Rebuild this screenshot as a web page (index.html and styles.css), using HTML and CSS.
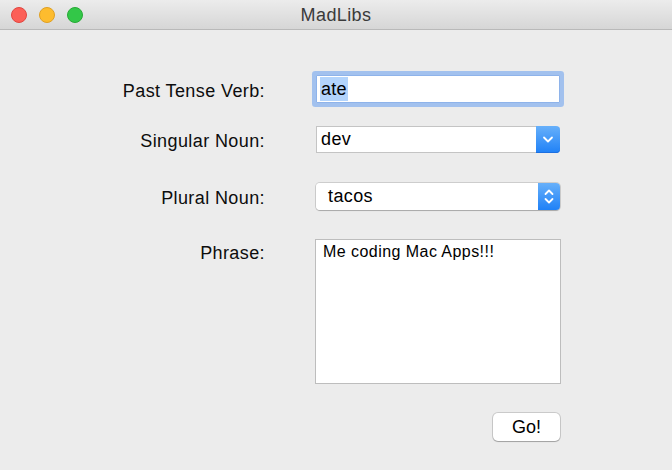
FILE: index.html
```html
<!DOCTYPE html>
<html lang="en">
<head>
<meta charset="utf-8">
<title>MadLibs</title>
<link rel="stylesheet" href="styles.css">
</head>
<body>
<div class="window">
  <header class="titlebar">
    <div class="lights">
      <span class="light red"></span>
      <span class="light yellow"></span>
      <span class="light green"></span>
    </div>
    <div class="title">MadLibs</div>
    <div class="spacer"></div>
  </header>
  <main class="content">
    <div class="row row-verb">
      <div class="label">Past Tense Verb:</div>
      <div class="textfield"><span class="selection">ate</span></div>
    </div>
    <div class="row row-noun">
      <div class="label">Singular Noun:</div>
      <div class="combo">
        <div class="combo-field">dev</div>
        <div class="combo-btn">
          <svg width="24" height="27" viewBox="0 0 24 27"><path d="M8 11.5 L12 15.5 L16 11.5" fill="none" stroke="#fff" stroke-width="1.8" stroke-linecap="round" stroke-linejoin="round"/></svg>
        </div>
      </div>
    </div>
    <div class="row row-plural">
      <div class="label">Plural Noun:</div>
      <div class="popup">
        <div class="popup-field">tacos</div>
        <div class="popup-btn">
          <svg width="22" height="27" viewBox="0 0 22 27"><path d="M7.5 11 L11 7.5 L14.5 11 M7.5 16 L11 19.5 L14.5 16" fill="none" stroke="#fff" stroke-width="1.8" stroke-linecap="round" stroke-linejoin="round"/></svg>
        </div>
      </div>
    </div>
    <div class="row row-phrase">
      <div class="label">Phrase:</div>
      <div class="textview">Me coding Mac Apps!!!</div>
    </div>
    <div class="actions">
      <button class="button" type="button">Go!</button>
    </div>
  </main>
</div>
</body>
</html>
```
FILE: styles.css
```css
html, body {
  margin: 0;
  padding: 0;
}
body {
  width: 672px;
  height: 470px;
  overflow: hidden;
  background: #ececec;
  font-family: "Liberation Sans", Arial, sans-serif;
  color: #111;
}
.window {
  width: 672px;
  height: 470px;
  background: #ececec;
}
.titlebar {
  height: 29px;
  border-bottom: 1px solid #b9b9b9;
  background: linear-gradient(#ececec, #d6d6d6);
  display: grid;
  grid-template-columns: 1fr auto 1fr;
  align-items: center;
}
.lights {
  display: flex;
  gap: 12px;
  padding-left: 11px;
}
.light {
  width: 14px;
  height: 14px;
  border-radius: 50%;
  display: block;
}
.red { background: #fc5f57; border: 1px solid #e1463f; }
.yellow { background: #fdbc2e; border: 1px solid #dfa023; }
.green { background: #33c748; border: 1px solid #27aa35; }
.title {
  font-size: 18px;
  color: #3a3a3a;
  letter-spacing: 0.4px;
  padding-top: 1px;
}
.content {
  padding-top: 45px;
}
.row {
  display: flex;
  align-items: flex-start;
}
.label {
  width: 265px;
  margin-right: 50px;
  text-align: right;
  font-size: 18px;
  line-height: 20px;
  letter-spacing: 0.4px;
  color: #0d0d0d;
}
.row-verb .label { padding-top: 6px; }
.row-noun { margin-top: 23px; }
.row-noun .label { padding-top: 5px; }
.row-plural { margin-top: 29px; }
.row-plural .label { padding-top: 6px; }
.row-phrase { margin-top: 29px; }
.row-phrase .label { padding-top: 4px; }

.textfield {
  box-sizing: border-box;
  margin-left: 1px;
  width: 244px;
  height: 28px;
  background: #fff;
  border: 1px solid #8eb3ea;
  border-radius: 1px;
  box-shadow: 0 0 0 4px #a2c1ee;
  padding: 1px 0 0 3px;
  font-size: 18px;
  letter-spacing: 0.3px;
}
.selection {
  display: inline-block;
  line-height: 24px;
  background: #b3d4fc;
  color: #000;
  padding: 0 1px 0 1px;
}

.combo {
  margin-left: 1px;
  width: 244px;
  height: 27px;
  display: flex;
}
.combo-field {
  flex: 1;
  box-sizing: border-box;
  background: #fff;
  border: 1px solid #c4c4c4;
  border-right: none;
  padding-left: 4px;
  font-size: 18px;
  line-height: 25px;
  letter-spacing: 0.4px;
  color: #000;
}
.combo-btn {
  width: 24px;
  height: 27px;
  border-radius: 0 4px 4px 0;
  background: linear-gradient(#67b0fa, #1f81f7);
  box-shadow: inset 0 -1px 0 #1c6fe0;
}
.combo-btn svg, .popup-btn svg { display: block; }

.popup {
  margin-left: 1px;
  margin-top: 1px;
  width: 244px;
  height: 27px;
  display: flex;
  border-radius: 4px;
  overflow: hidden;
  box-shadow: 0 0 0 1px rgba(0, 0, 0, 0.13), 0 1px 1px rgba(0, 0, 0, 0.18);
}
.popup-field {
  flex: 1;
  background: #fff;
  padding-left: 12px;
  font-size: 18px;
  line-height: 26px;
  letter-spacing: 0.4px;
  color: #000;
}
.popup-btn {
  width: 22px;
  height: 27px;
  background: linear-gradient(#67b0fa, #1f81f7);
}

.textview {
  box-sizing: border-box;
  width: 246px;
  height: 145px;
  background: #fff;
  border: 1px solid #bdbdbd;
  padding: 2px 7px;
  font-size: 16px;
  line-height: 19px;
  letter-spacing: 0.45px;
  color: #000;
}

.actions {
  width: 561px;
  margin-top: 29px;
  display: flex;
  justify-content: flex-end;
}
.button {
  width: 67px;
  height: 28px;
  margin-right: 1px;
  background: #fff;
  border: none;
  border-radius: 5px;
  box-shadow: 0 0 0 1px rgba(0, 0, 0, 0.14), 0 1px 1px rgba(0, 0, 0, 0.2);
  font-family: "Liberation Sans", Arial, sans-serif;
  font-size: 18px;
  color: #000;
  padding: 0;
}
```
